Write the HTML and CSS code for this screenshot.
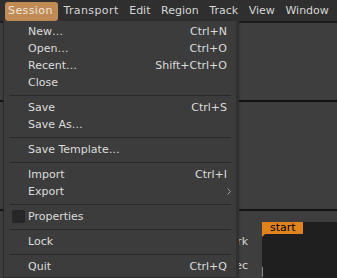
FILE: index.html
```html
<!DOCTYPE html>
<html>
<head>
<meta charset="utf-8">
<link rel="stylesheet" href="styles.css">
</head>
<body>
<div class="app">
  <nav class="menubar">
    <span class="mb-item active wide">Session</span>
    <span class="mb-item wide">Transport</span>
    <span class="mb-item">Edit</span>
    <span class="mb-item">Region</span>
    <span class="mb-item">Track</span>
    <span class="mb-item">View</span>
    <span class="mb-item">Window</span>
  </nav>
  <div class="workspace">
    <div class="pane pane-top"></div>
    <div class="pane pane-mid"></div>
    <div class="pane rulers">
      <div class="ruler-labels">
        <div class="ruler-label">Mark</div>
        <div class="ruler-label">Min:Sec</div>
      </div>
      <div class="canvas">
        <div class="marker">start</div>
        <div class="marker-foot"></div>
        <div class="playhead"></div>
      </div>
    </div>
  </div>

  <div class="menu">
    <div class="mi"><span></span><span>New…</span><span class="sc">Ctrl+N</span></div>
    <div class="mi"><span></span><span>Open…</span><span class="sc">Ctrl+O</span></div>
    <div class="mi"><span></span><span>Recent…</span><span class="sc">Shift+Ctrl+O</span></div>
    <div class="mi"><span></span><span>Close</span><span class="sc"></span></div>
    <div class="sep"></div>
    <div class="mi"><span></span><span>Save</span><span class="sc">Ctrl+S</span></div>
    <div class="mi"><span></span><span>Save As…</span><span class="sc"></span></div>
    <div class="sep"></div>
    <div class="mi"><span></span><span>Save Template…</span><span class="sc"></span></div>
    <div class="sep"></div>
    <div class="mi"><span></span><span>Import</span><span class="sc">Ctrl+I</span></div>
    <div class="mi"><span></span><span>Export</span><span class="sc"><svg class="arrow" width="4" height="7" viewBox="0 0 4 7"><path d="M0.5 0.5 L3.5 3.5 L0.5 6.5" fill="none" stroke="#9a9a9a" stroke-width="1"/></svg></span></div>
    <div class="sep"></div>
    <div class="mi"><span class="check"></span><span>Properties</span><span class="sc"></span></div>
    <div class="sep"></div>
    <div class="mi"><span></span><span>Lock</span><span class="sc"></span></div>
    <div class="sep"></div>
    <div class="mi"><span></span><span>Quit</span><span class="sc">Ctrl+Q</span></div>
  </div>
</div>
</body>
</html>
```
FILE: styles.css
```css
html, body {
  margin: 0;
  padding: 0;
}
body {
  width: 337px;
  height: 278px;
  overflow: hidden;
  background: #3e3e3e;
  font-family: "DejaVu Sans", sans-serif;
  font-size: 11px;
  color: #dadada;
}
.app {
  position: relative;
  width: 337px;
  height: 278px;
  overflow: hidden;
}
.menubar {
  display: flex;
  height: 21px;
  box-sizing: border-box;
  padding: 2px 0 0 5px;
  background: #2f2f2f;
}
.mb-item {
  height: 19px;
  line-height: 17px;
  padding: 0 5.3px;
  color: #d6d6d6;
  white-space: nowrap;
  border-radius: 3px;
}
.mb-item.wide {
  letter-spacing: 0.4px;
}
.mb-item.active {
  padding-left: 3px;
  background: #c08b55;
  color: #efe6dc;
}
.workspace {
  display: flex;
  flex-direction: column;
  height: 257px;
}
.pane {
  background: #3e3e3e;
}
.pane-top {
  height: 78px;
  border-top: 2px solid #1c1c1c;
}
.pane-mid {
  height: 109px;
  border-top: 2px solid #121212;
}
.rulers {
  flex: 1;
  border-top: 2px solid #141414;
  display: grid;
  grid-template-columns: 262px 1fr;
  padding-top: 11px;
}
.ruler-labels {
  padding: 8px 14px 0 0;
  text-align: right;
}
.ruler-label {
  height: 24px;
  line-height: 24px;
  color: #d8d8d8;
}
.canvas {
  position: relative;
  background: #1f1f1f;
}
.marker {
  width: 41px;
  height: 12px;
  box-sizing: border-box;
  padding-left: 8px;
  line-height: 12px;
  background: #e0831c;
  color: #000;
}
.marker-foot {
  width: 0;
  height: 0;
  border-top: 3px solid #e0831c;
  border-right: 3px solid transparent;
}
.playhead {
  position: absolute;
  left: 0;
  top: 45px;
  width: 1px;
  height: 10px;
  background: #8a8a8a;
}
.menu {
  position: absolute;
  left: 3px;
  top: 21px;
  width: 232px;
  padding: 2px 0 2px;
  background: #3c3c3c;
  border-left: 1px solid #2a2a2a;
  border-bottom: 1px solid #2a2a2a;
  box-shadow: 3px 0 0 #303030, 2px 2px 3px rgba(0, 0, 0, 0.45);
}
.mi {
  display: grid;
  grid-template-columns: 24px 1fr auto;
  height: 17px;
  line-height: 17px;
  padding-right: 9px;
  white-space: nowrap;
  color: #dcdcdc;
}
.sc {
  text-align: right;
}
.arrow {
  display: block;
  margin: 5px -5px 0 0;
}
.check {
  width: 13px;
  height: 13px;
  margin: 2px 0 0 8px;
  background: #262626;
  border-radius: 2px;
}
.sep {
  height: 1px;
  margin: 4px 5px 3px 6px;
  background: #2a2a2a;
}
```
